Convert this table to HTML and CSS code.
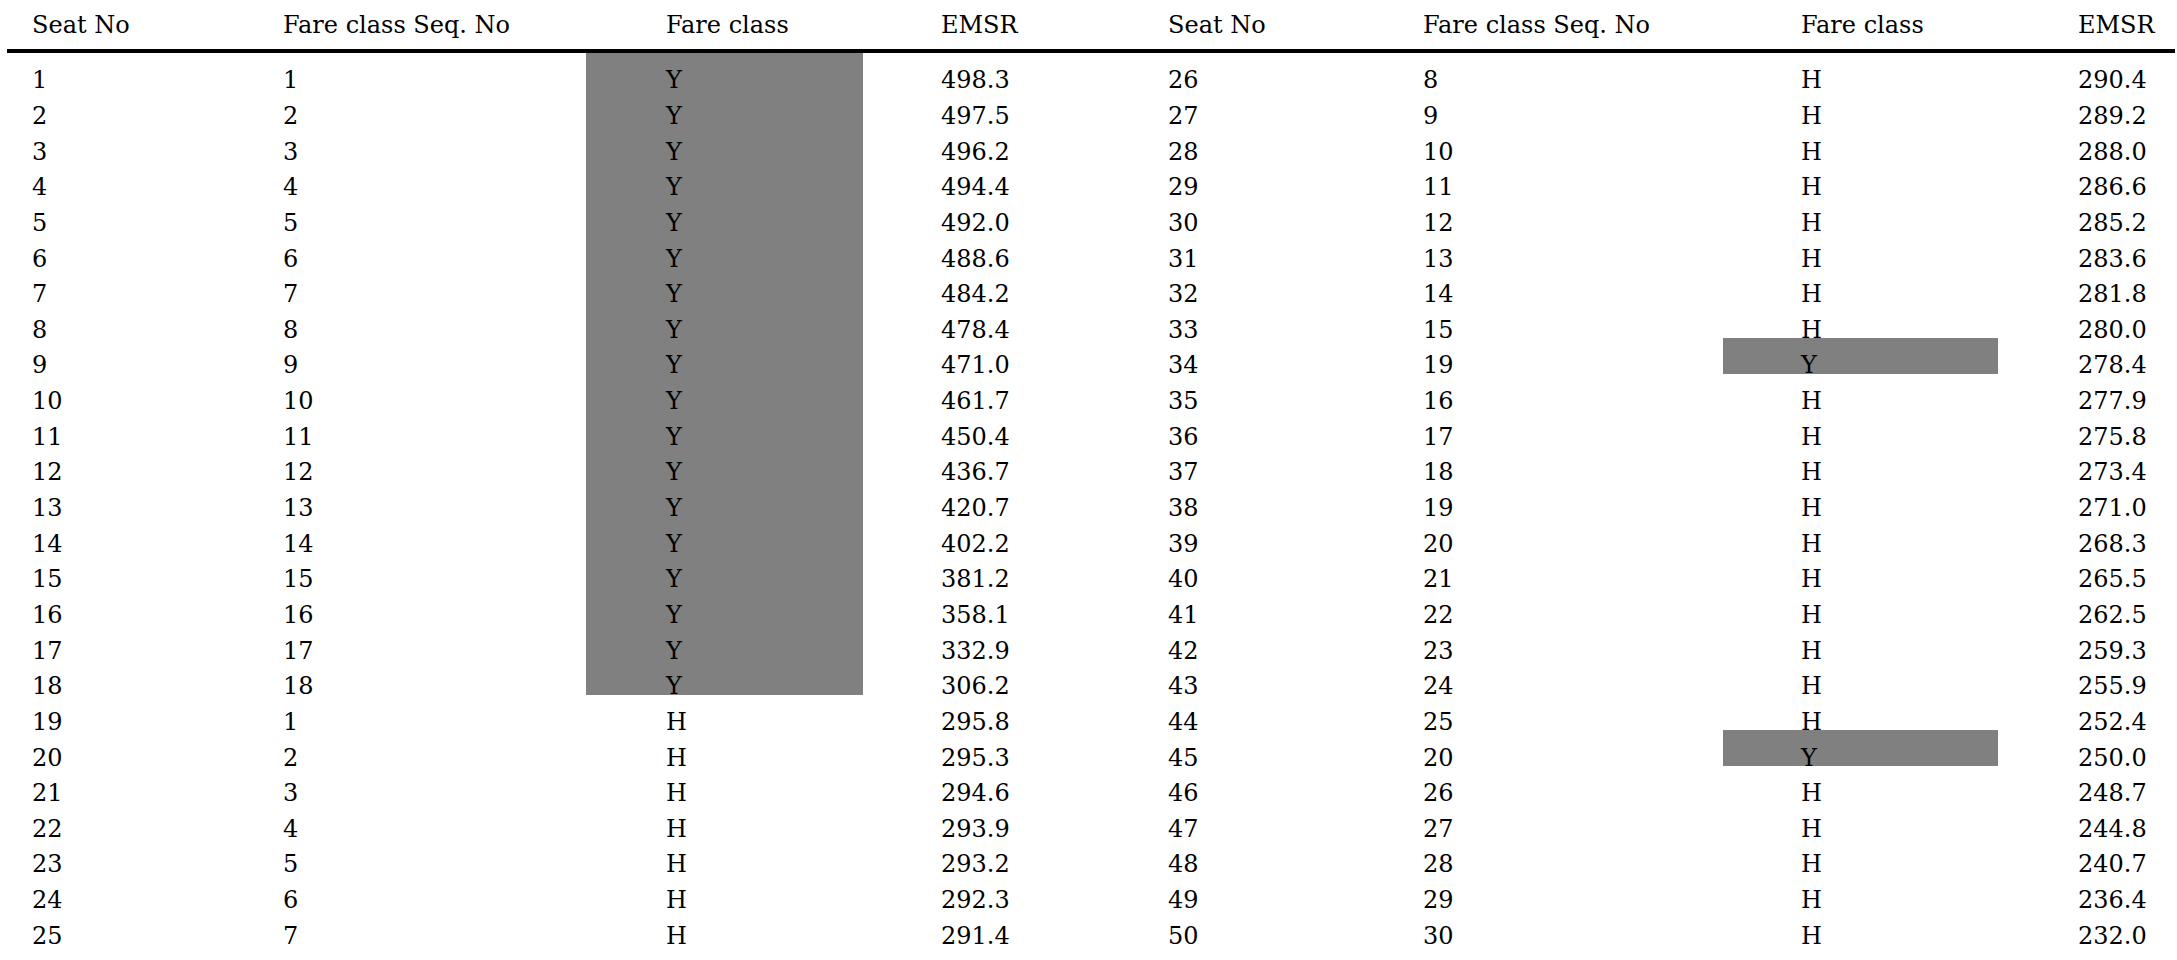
FILE: index.html
```html
<!DOCTYPE html>
<html>
<head>
<meta charset="utf-8">
<link rel="stylesheet" href="styles.css">
</head>
<body>
<div class="table">
  <div class="row head">
    <div class="c c1">Seat No</div><div class="c c2">Fare class Seq. No</div><div class="c c3">Fare class</div><div class="c c4">EMSR</div>
    <div class="c c5">Seat No</div><div class="c c6">Fare class Seq. No</div><div class="c c7">Fare class</div><div class="c c8">EMSR</div>
  </div>
  <div class="row"><div class="c c1">1</div><div class="c c2">1</div><div class="c c3 hl">Y</div><div class="c c4">498.3</div><div class="c c5">26</div><div class="c c6">8</div><div class="c c7">H</div><div class="c c8">290.4</div></div>
  <div class="row"><div class="c c1">2</div><div class="c c2">2</div><div class="c c3 hl">Y</div><div class="c c4">497.5</div><div class="c c5">27</div><div class="c c6">9</div><div class="c c7">H</div><div class="c c8">289.2</div></div>
  <div class="row"><div class="c c1">3</div><div class="c c2">3</div><div class="c c3 hl">Y</div><div class="c c4">496.2</div><div class="c c5">28</div><div class="c c6">10</div><div class="c c7">H</div><div class="c c8">288.0</div></div>
  <div class="row"><div class="c c1">4</div><div class="c c2">4</div><div class="c c3 hl">Y</div><div class="c c4">494.4</div><div class="c c5">29</div><div class="c c6">11</div><div class="c c7">H</div><div class="c c8">286.6</div></div>
  <div class="row"><div class="c c1">5</div><div class="c c2">5</div><div class="c c3 hl">Y</div><div class="c c4">492.0</div><div class="c c5">30</div><div class="c c6">12</div><div class="c c7">H</div><div class="c c8">285.2</div></div>
  <div class="row"><div class="c c1">6</div><div class="c c2">6</div><div class="c c3 hl">Y</div><div class="c c4">488.6</div><div class="c c5">31</div><div class="c c6">13</div><div class="c c7">H</div><div class="c c8">283.6</div></div>
  <div class="row"><div class="c c1">7</div><div class="c c2">7</div><div class="c c3 hl">Y</div><div class="c c4">484.2</div><div class="c c5">32</div><div class="c c6">14</div><div class="c c7">H</div><div class="c c8">281.8</div></div>
  <div class="row"><div class="c c1">8</div><div class="c c2">8</div><div class="c c3 hl">Y</div><div class="c c4">478.4</div><div class="c c5">33</div><div class="c c6">15</div><div class="c c7">H</div><div class="c c8">280.0</div></div>
  <div class="row"><div class="c c1">9</div><div class="c c2">9</div><div class="c c3 hl">Y</div><div class="c c4">471.0</div><div class="c c5">34</div><div class="c c6">19</div><div class="c c7 hl">Y</div><div class="c c8">278.4</div></div>
  <div class="row"><div class="c c1">10</div><div class="c c2">10</div><div class="c c3 hl">Y</div><div class="c c4">461.7</div><div class="c c5">35</div><div class="c c6">16</div><div class="c c7">H</div><div class="c c8">277.9</div></div>
  <div class="row"><div class="c c1">11</div><div class="c c2">11</div><div class="c c3 hl">Y</div><div class="c c4">450.4</div><div class="c c5">36</div><div class="c c6">17</div><div class="c c7">H</div><div class="c c8">275.8</div></div>
  <div class="row"><div class="c c1">12</div><div class="c c2">12</div><div class="c c3 hl">Y</div><div class="c c4">436.7</div><div class="c c5">37</div><div class="c c6">18</div><div class="c c7">H</div><div class="c c8">273.4</div></div>
  <div class="row"><div class="c c1">13</div><div class="c c2">13</div><div class="c c3 hl">Y</div><div class="c c4">420.7</div><div class="c c5">38</div><div class="c c6">19</div><div class="c c7">H</div><div class="c c8">271.0</div></div>
  <div class="row"><div class="c c1">14</div><div class="c c2">14</div><div class="c c3 hl">Y</div><div class="c c4">402.2</div><div class="c c5">39</div><div class="c c6">20</div><div class="c c7">H</div><div class="c c8">268.3</div></div>
  <div class="row"><div class="c c1">15</div><div class="c c2">15</div><div class="c c3 hl">Y</div><div class="c c4">381.2</div><div class="c c5">40</div><div class="c c6">21</div><div class="c c7">H</div><div class="c c8">265.5</div></div>
  <div class="row"><div class="c c1">16</div><div class="c c2">16</div><div class="c c3 hl">Y</div><div class="c c4">358.1</div><div class="c c5">41</div><div class="c c6">22</div><div class="c c7">H</div><div class="c c8">262.5</div></div>
  <div class="row"><div class="c c1">17</div><div class="c c2">17</div><div class="c c3 hl">Y</div><div class="c c4">332.9</div><div class="c c5">42</div><div class="c c6">23</div><div class="c c7">H</div><div class="c c8">259.3</div></div>
  <div class="row"><div class="c c1">18</div><div class="c c2">18</div><div class="c c3 hl">Y</div><div class="c c4">306.2</div><div class="c c5">43</div><div class="c c6">24</div><div class="c c7">H</div><div class="c c8">255.9</div></div>
  <div class="row"><div class="c c1">19</div><div class="c c2">1</div><div class="c c3">H</div><div class="c c4">295.8</div><div class="c c5">44</div><div class="c c6">25</div><div class="c c7">H</div><div class="c c8">252.4</div></div>
  <div class="row"><div class="c c1">20</div><div class="c c2">2</div><div class="c c3">H</div><div class="c c4">295.3</div><div class="c c5">45</div><div class="c c6">20</div><div class="c c7 hl">Y</div><div class="c c8">250.0</div></div>
  <div class="row"><div class="c c1">21</div><div class="c c2">3</div><div class="c c3">H</div><div class="c c4">294.6</div><div class="c c5">46</div><div class="c c6">26</div><div class="c c7">H</div><div class="c c8">248.7</div></div>
  <div class="row"><div class="c c1">22</div><div class="c c2">4</div><div class="c c3">H</div><div class="c c4">293.9</div><div class="c c5">47</div><div class="c c6">27</div><div class="c c7">H</div><div class="c c8">244.8</div></div>
  <div class="row"><div class="c c1">23</div><div class="c c2">5</div><div class="c c3">H</div><div class="c c4">293.2</div><div class="c c5">48</div><div class="c c6">28</div><div class="c c7">H</div><div class="c c8">240.7</div></div>
  <div class="row"><div class="c c1">24</div><div class="c c2">6</div><div class="c c3">H</div><div class="c c4">292.3</div><div class="c c5">49</div><div class="c c6">29</div><div class="c c7">H</div><div class="c c8">236.4</div></div>
  <div class="row"><div class="c c1">25</div><div class="c c2">7</div><div class="c c3">H</div><div class="c c4">291.4</div><div class="c c5">50</div><div class="c c6">30</div><div class="c c7">H</div><div class="c c8">232.0</div></div>
</div>
</body>
</html>
```

FILE: styles.css
```css
html, body {
  margin: 0;
  padding: 0;
  background: #ffffff;
}

body {
  font-family: "DejaVu Serif", "Liberation Serif", serif;
  font-size: 24px;
  color: #000000;
  overflow: hidden;
}

.table {
  margin-left: 7px;
  width: 2168px;
}

.row {
  display: grid;
  grid-template-columns: 251px 328px 277px 280px 255px 325px 275px 177px;
  height: 35.65px;
}

.c {
  box-sizing: border-box;
  height: 35.65px;
  line-height: 28px;
  padding-top: 13.35px;
  white-space: nowrap;
}

.row.head {
  height: 49px;
  border-bottom: 4px solid #000000;
}

.row.head .c {
  height: 49px;
  padding-top: 11px;
}

.c1, .c2, .c5, .c6 { padding-left: 25px; }
.c3 { padding-left: 80px; }
.c4 { padding-left: 78px; }
.c7 { padding-left: 78px; }
.c8 { padding-left: 80px; }

.hl {
  background: #808080;
}
```
